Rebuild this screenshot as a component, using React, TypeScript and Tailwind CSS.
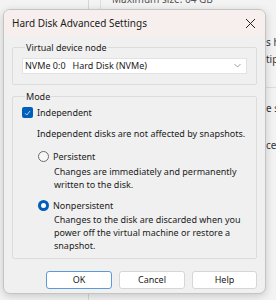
import React from "react";

function Radio({ checked }: { checked?: boolean }) {
  return checked ? (
    <span className="w-[11px] h-[11px] rounded-full bg-[#005fb8] flex items-center justify-center shrink-0">
      <span className="w-[5px] h-[5px] rounded-full bg-white" />
    </span>
  ) : (
    <span className="w-[11px] h-[11px] rounded-full border border-[#6b6b6b] bg-[#f7f7f7] shrink-0" />
  );
}

export default function App() {
  return (
    <div
      className="relative w-[276px] h-[300px] overflow-hidden bg-[#f3f3f3] text-[#1b1b1b] whitespace-nowrap"
      style={{ fontFamily: '"Segoe UI", "Noto Sans", sans-serif' }}
    >
      {/* window behind the dialog */}
      <div className="absolute left-[88px] top-0 bottom-0 w-px bg-[#d6d6d6]" />
      <div className="absolute left-[100px] top-0 h-[10px] w-px bg-[#dedede]" />
      <div className="absolute left-[112px] top-[-8px] text-[10px] text-[#555]">Maximum size: 64 GB</div>
      <div className="absolute left-[266px] top-[34px] text-[10px] leading-[17px] text-[#333]">
        <div>s h</div>
        <div>tip</div>
      </div>
      <div className="absolute left-[266px] top-[87px] w-[10px] h-px bg-[#dcdcdc]" />
      <div className="absolute left-[266px] top-[101px] text-[10px] text-[#333]">e s</div>
      <div className="absolute left-[266px] top-[138px] text-[10px] text-[#333]">ce.</div>

      {/* dialog */}
      <div className="absolute left-[3px] top-[9px] w-[263px] h-[285px] rounded-[7px] border border-[#c4c4c4] bg-[#f0f0f0] shadow-[0_2px_8px_rgba(0,0,0,0.18)] overflow-hidden flex flex-col">
        <div className="h-[26px] bg-[#f7efee] flex items-center justify-between pl-[8px] pr-[9px] shrink-0">
          <span className="text-[10px] mt-[1px]">Hard Disk Advanced Settings</span>
          <svg width="11" height="11" viewBox="0 0 11 11">
            <path d="M1 1L10 10M10 1L1 10" stroke="#222" strokeWidth="1" />
          </svg>
        </div>

        <div className="flex flex-col px-[8px] pt-[5px] text-[9px]">
          <fieldset className="border border-[#dcdcdc] rounded-[2px] px-[9px] pb-[10px] pt-[3px]">
            <legend className="px-[1px] ml-[3px]">Virtual device node</legend>
            <div className="h-[16px] bg-white border border-[#e2e2e2] flex items-center justify-between pl-[2px] pr-[5px]">
              <span className="whitespace-pre">NVMe 0:0   Hard Disk (NVMe)</span>
              <svg width="7" height="5" viewBox="0 0 7 5">
                <path d="M0.5 1L3.5 4L6.5 1" stroke="#888" fill="none" strokeWidth="0.8" />
              </svg>
            </div>
          </fieldset>

          <fieldset className="mt-[5px] border border-[#dcdcdc] rounded-[2px] pl-[9px] pr-[6px] pb-[6px] pt-[3px]">
            <legend className="px-[1px] ml-[3px]">Mode</legend>
            <div className="flex items-center gap-[4px]">
              <span className="w-[11px] h-[11px] rounded-[2px] bg-[#005fb8] flex items-center justify-center">
                <svg width="7" height="6" viewBox="0 0 7 6">
                  <path d="M1 3.2L2.8 5L6 1" stroke="#cfe3f6" fill="none" strokeWidth="0.9" />
                </svg>
              </span>
              <span>Independent</span>
            </div>
            <div className="pl-[15px] mt-[7px]">Independent disks are not affected by snapshots.</div>

            <div className="pl-[16px] mt-[10px] flex flex-col">
              <div className="flex items-center gap-[4px]">
                <Radio />
                <span>Persistent</span>
              </div>
              <div className="leading-[13px] pl-[16px] mt-[1px]">
                Changes are immediately and permanently
                <br />
                written to the disk.
              </div>

              <div className="flex items-center gap-[4px] mt-[8px]">
                <Radio checked />
                <span>Nonpersistent</span>
              </div>
              <div className="leading-[13px] pl-[16px] mt-[1px]">
                Changes to the disk are discarded when you
                <br />
                power off the virtual machine or restore a
                <br />
                snapshot.
              </div>
            </div>
          </fieldset>

          <div className="flex justify-end gap-[7px] mt-[12px]">
            <button className="w-[66px] h-[18px] bg-white border border-[#5b9bd8] rounded-[3px]">OK</button>
            <button className="w-[66px] h-[18px] bg-white border border-[#d6d6d6] rounded-[3px]">Cancel</button>
            <button className="w-[65px] h-[18px] bg-white border border-[#d6d6d6] rounded-[3px]">Help</button>
          </div>
        </div>
      </div>
    </div>
  );
}
